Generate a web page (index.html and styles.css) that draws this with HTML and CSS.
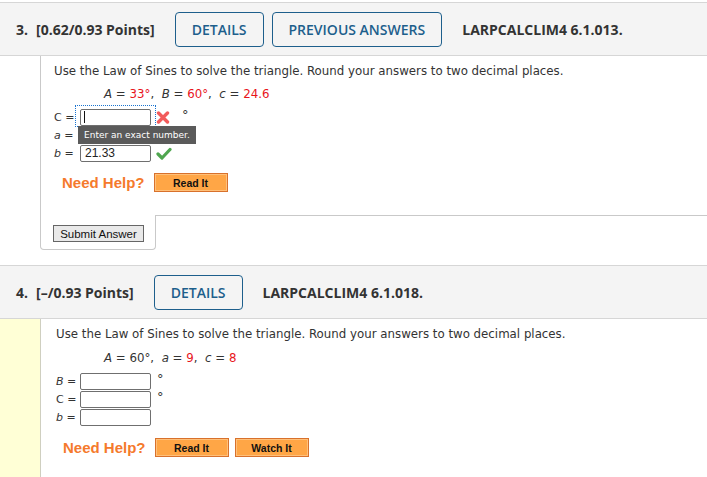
FILE: index.html
```html
<!DOCTYPE html>
<html>
<head>
<meta charset="utf-8">
<link rel="stylesheet" href="styles.css">
</head>
<body>
<div class="question q3">
  <div class="q-header">
    <span class="q-num">3.</span>
    <span class="q-points">[0.62/0.93 Points]</span>
    <span class="q-btn">DETAILS</span>
    <span class="q-btn">PREVIOUS ANSWERS</span>
    <span class="q-code">LARPCALCLIM4 6.1.013.</span>
  </div>
  <div class="q-body">
    <div class="q-content">
      <p class="prompt">Use the Law of Sines to solve the triangle. Round your answers to two decimal places.</p>
      <p class="given"><i>A</i> = <span class="red">33°</span>,&nbsp; <i>B</i> = <span class="red">60°</span>,&nbsp; <i>c</i> = <span class="red">24.6</span></p>
      <div class="answers">
        <div class="row">
          <span class="lbl">C =</span>
          <span class="field focused"><span class="caret"></span></span>
          <svg class="mark" width="14" height="13" viewBox="0 0 14 13"><path d="M2.5 2 L11.5 11 M11.5 2 L2.5 11" stroke="#f25b5b" stroke-width="3.4" stroke-linecap="round"/></svg>
          <span class="deg wide">°</span>
        </div>
        <div class="row">
          <span class="lbl"><i>a</i> =</span>
          <span class="field"></span>
          <span class="tooltip">Enter an exact number.</span>
        </div>
        <div class="row">
          <span class="lbl"><i>b</i> =</span>
          <span class="field">21.33</span>
          <svg class="mark" width="16" height="13" viewBox="0 0 16 13"><path d="M2 7 L6 11 L14 2.5" fill="none" stroke="#4fa64f" stroke-width="3.2" stroke-linecap="round" stroke-linejoin="round"/></svg>
        </div>
      </div>
      <div class="help">
        <span class="need">Need Help?</span>
        <span class="help-btn">Read It</span>
      </div>
    </div>
    <div class="q-footer">
      <div class="submit-cell"><span class="submit">Submit Answer</span></div>
      <div class="footer-rest"></div>
    </div>
  </div>
</div>

<div class="question q4">
  <div class="q-header">
    <span class="q-num">4.</span>
    <span class="q-points">[–/0.93 Points]</span>
    <span class="q-btn">DETAILS</span>
    <span class="q-code">LARPCALCLIM4 6.1.018.</span>
  </div>
  <div class="q-body">
    <div class="gutter"></div>
    <div class="q-content">
      <p class="prompt">Use the Law of Sines to solve the triangle. Round your answers to two decimal places.</p>
      <p class="given"><i>A</i> = 60°,&nbsp; <i>a</i> = <span class="red">9</span>,&nbsp; <i>c</i> = <span class="red">8</span></p>
      <div class="answers">
        <div class="row">
          <span class="lbl"><i>B</i> =</span>
          <span class="field"></span>
          <span class="deg">°</span>
        </div>
        <div class="row">
          <span class="lbl">C =</span>
          <span class="field"></span>
          <span class="deg">°</span>
        </div>
        <div class="row">
          <span class="lbl"><i>b</i> =</span>
          <span class="field"></span>
        </div>
      </div>
      <div class="help">
        <span class="need">Need Help?</span>
        <span class="help-btn">Read It</span>
        <span class="help-btn">Watch It</span>
      </div>
    </div>
  </div>
</div>
</body>
</html>
```

FILE: styles.css
```css
* { box-sizing: border-box; }
html, body { margin: 0; padding: 0; background: #fff; }
body {
  width: 707px;
  height: 477px;
  overflow: hidden;
  padding-top: 2px;
  font-family: "DejaVu Sans", Verdana, sans-serif;
  font-size: 11.8px;
  color: #333;
}
p { margin: 0; }

.q-header {
  display: flex;
  align-items: center;
  height: 54px;
  padding-left: 16px;
  background: #f4f4f4;
  border-top: 1px solid #d6d6d6;
  border-bottom: 1px solid #d6d6d6;
  font-family: "Open Sans", sans-serif;
  font-weight: 700;
  font-size: 14px;
  color: #333;
}
.q-num { width: 20px; }
.q-points { margin-right: 20px; }
.q-btn {
  display: flex;
  align-items: center;
  height: 35px;
  padding: 0 16px;
  margin-right: 8px;
  border: 1px solid #1d5f8c;
  border-radius: 4px;
  color: #1d5f8c;
  font-weight: 600;
}
.q-code { margin-left: 12px; }

/* question 3 body */
.q3 .q-body { margin-left: 40px; }
.q3 .q-content {
  border-left: 1px solid #c9c9c9;
  padding: 7px 0 23px 13px;
}
.q4 .q-body { display: flex; height: 170px; }
.gutter {
  width: 41px;
  background: #ffffd6;
  border-right: 1px solid #cfcfc0;
}
.q4 .q-content { padding: 7px 0 0 15px; }

.prompt { line-height: 16px; }
.given { line-height: 16px; margin-top: 7px; padding-left: 50px; }
.q4 .given { margin-top: 8px; padding-left: 48px; }
.given i { font-style: italic; }
.red { color: #e8141b; }

.answers { margin-top: 6px; }
.row {
  position: relative;
  display: flex;
  align-items: center;
  height: 18px;
}
.lbl { width: 26px; white-space: nowrap; font-size: 11px; }
.q4 .lbl { width: 24px; }
.field {
  position: relative;
  display: flex;
  align-items: center;
  width: 71px;
  height: 17px;
  border: 1px solid #6f6f6f;
  border-radius: 2px;
  padding-left: 4px;
  font-family: "Liberation Sans", Arial, sans-serif;
  font-size: 12px;
  color: #222;
  background: #fff;
}
.field.focused::before {
  content: "";
  position: absolute;
  top: -5px;
  left: -6px;
  right: -6px;
  bottom: -2px;
  border: 1px dotted #1a74d0;
}
.caret { width: 1px; height: 12px; background: #111; margin-left: -1px; }
.mark { margin-left: 5px; }
.deg { margin-left: 6px; font-size: 13px; line-height: 1; margin-top: -5px; }
.deg.wide { margin-left: 12px; }

.tooltip {
  position: absolute;
  left: 24px;
  top: 0;
  width: 118px;
  height: 18px;
  background: #5a5a5a;
  color: #fff;
  font-size: 9px;
  line-height: 18px;
  padding-left: 6px;
  white-space: nowrap;
}

.help {
  display: flex;
  align-items: center;
  gap: 6px;
  margin-top: 11px;
  padding-left: 8px;
  height: 19px;
}
.q4 .help { margin-top: 12px; padding-left: 7px; }
.need {
  font-family: "Liberation Sans", Arial, sans-serif;
  font-weight: 700;
  font-size: 15px;
  color: #f57a2c;
  margin-right: 3px;
}
.help-btn {
  display: flex;
  align-items: center;
  justify-content: center;
  width: 74px;
  height: 19px;
  background: #ffa646;
  border: 1px solid #d8712c;
  box-shadow: inset 0 0 0 1px #ffc07a;
  font-family: "Liberation Sans", Arial, sans-serif;
  font-weight: 700;
  font-size: 10.5px;
  color: #111;
}

.q-footer { display: flex; height: 35px; }
.submit-cell {
  width: 116px;
  border-left: 1px solid #c9c9c9;
  border-right: 1px solid #c9c9c9;
  border-bottom: 1px solid #c9c9c9;
  border-radius: 0 0 4px 4px;
  padding: 10px 0 0 12px;
}
.footer-rest { flex: 1; border-top: 1px solid #c9c9c9; }
.submit {
  display: inline-flex;
  align-items: center;
  justify-content: center;
  width: 91px;
  height: 17px;
  background: #e9e9e9;
  border: 1px solid #666;
  font-family: "Liberation Sans", Arial, sans-serif;
  font-size: 11.5px;
  color: #111;
}

.q4 { margin-top: 15px; }
```
